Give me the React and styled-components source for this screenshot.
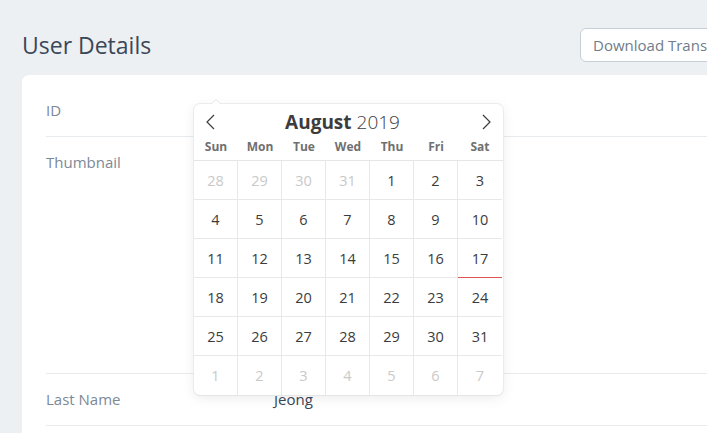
import React from "react";
import styled, { createGlobalStyle } from "styled-components";

const Global = createGlobalStyle`
  html, body { margin: 0; padding: 0; background: #edf0f3; overflow: hidden; }
  body { font-family: "Open Sans", "Noto Sans", sans-serif; }
  * { box-sizing: border-box; }
`;

const Page = styled.div`
  position: relative;
  width: 900px;
  padding: 28px 0 0 22px;
`;

const Header = styled.div`
  display: flex;
  align-items: center;
  height: 34px;
  margin-bottom: 13px;
`;

const Title = styled.h1`
  flex: 0 0 558px;
  margin: 0;
  font-size: 23px;
  font-weight: 400;
  color: #3b4759;
`;

const Button = styled.button`
  height: 34px;
  padding: 0 12px;
  border: 1px solid #c6ced7;
  border-radius: 6px;
  background: #fff;
  font-family: inherit;
  font-size: 15px;
  color: #717c8a;
  white-space: nowrap;
`;

const Card = styled.div`
  width: 800px;
  background: #fff;
  border-radius: 7px;
  padding: 10px 0 0 24px;
  min-height: 400px;
`;

const Row = styled.div`
  display: flex;
  padding: 14px 0 15px;
  border-bottom: 1px solid #e8ebee;
  line-height: 22px;
`;

const Label = styled.div`
  flex: 0 0 228px;
  font-size: 15px;
  color: #7d8897;
`;

const Value = styled.div`
  font-size: 15px;
  color: #3b4759;
  min-height: ${(p) => p.$h || 22}px;
`;

const Popover = styled.div`
  position: absolute;
  left: 194px;
  top: 104px;
  width: 309px;
  background: #fff;
  border-radius: 6px;
  box-shadow: 0 1px 1px #e6e6e6, 0 0 0 1px #ececec, 0 3px 13px rgba(0, 0, 0, 0.08);
  &::before {
    content: "";
    position: absolute;
    left: 17px;
    top: -5px;
    width: 0;
    height: 0;
    border-left: 5px solid transparent;
    border-right: 5px solid transparent;
    border-bottom: 5px solid #e6e6e6;
  }
  &::after {
    content: "";
    position: absolute;
    left: 18px;
    top: -4px;
    width: 0;
    height: 0;
    border-left: 4px solid transparent;
    border-right: 4px solid transparent;
    border-bottom: 4px solid #fff;
  }
`;

const MonthBar = styled.div`
  display: flex;
  align-items: center;
  justify-content: space-between;
  height: 34px;
  padding: 1px 10px 0 10px;
`;

const Nav = styled.svg`
  width: 14px;
  height: 18px;
  fill: none;
  stroke: #3c3c3c;
  stroke-width: 1.2;
`;

const MonthTitle = styled.div`
  font-size: 19px;
  color: #3c3c3c;
  padding-right: 12px;
  b { font-weight: 700; }
  span { font-weight: 300; margin-left: 5px; }
`;

const Weekdays = styled.div`
  display: grid;
  grid-template-columns: repeat(7, 44px);
  height: 23px;
  align-items: start;
  border-bottom: 1px solid #e6e6e6;
`;

const Weekday = styled.div`
  text-align: center;
  font-size: 12px;
  line-height: 18px;
  font-weight: 700;
  color: #707070;
`;

const Grid = styled.div`
  display: grid;
  grid-template-columns: repeat(7, 44px);
  grid-auto-rows: 39px;
`;

const Day = styled.div`
  display: flex;
  align-items: center;
  justify-content: center;
  font-size: 14.5px;
  color: ${(p) => (p.$muted ? "#c9c9c9" : "#3c3c3c")};
  border-right: ${(p) => (p.$last ? "none" : "1px solid #e8e8e8")};
  border-bottom: ${(p) => (p.$today ? "1px solid #e15353" : p.$bottom ? "none" : "1px solid #e8e8e8")};
`;

const weekdays = ["Sun", "Mon", "Tue", "Wed", "Thu", "Fri", "Sat"];

const days = [];
[28, 29, 30, 31].forEach((d) => days.push({ d, muted: true }));
for (let i = 1; i <= 31; i++) days.push({ d: i, today: i === 17 });
for (let i = 1; i <= 7; i++) days.push({ d: i, muted: true });

export default function App() {
  return (
    <>
      <Global />
      <Page>
        <Header>
          <Title>User Details</Title>
          <Button>Download Transactions</Button>
        </Header>
        <Card>
          <Row>
            <Label>ID</Label>
            <Value />
          </Row>
          <Row>
            <Label>Thumbnail</Label>
            <Value $h={207} />
          </Row>
          <Row>
            <Label>Last Name</Label>
            <Value>Jeong</Value>
          </Row>
        </Card>
        <Popover>
          <MonthBar>
            <Nav viewBox="0 0 14 18">
              <polyline points="10,2 3,9 10,16" />
            </Nav>
            <MonthTitle>
              <b>August</b>
              <span>2019</span>
            </MonthTitle>
            <Nav viewBox="0 0 14 18">
              <polyline points="4,2 11,9 4,16" />
            </Nav>
          </MonthBar>
          <Weekdays>
            {weekdays.map((w) => (
              <Weekday key={w}>{w}</Weekday>
            ))}
          </Weekdays>
          <Grid>
            {days.map((x, i) => (
              <Day
                key={i}
                $muted={x.muted}
                $today={x.today}
                $last={i % 7 === 6}
                $bottom={i >= 35}
              >
                {x.d}
              </Day>
            ))}
          </Grid>
        </Popover>
      </Page>
    </>
  );
}
